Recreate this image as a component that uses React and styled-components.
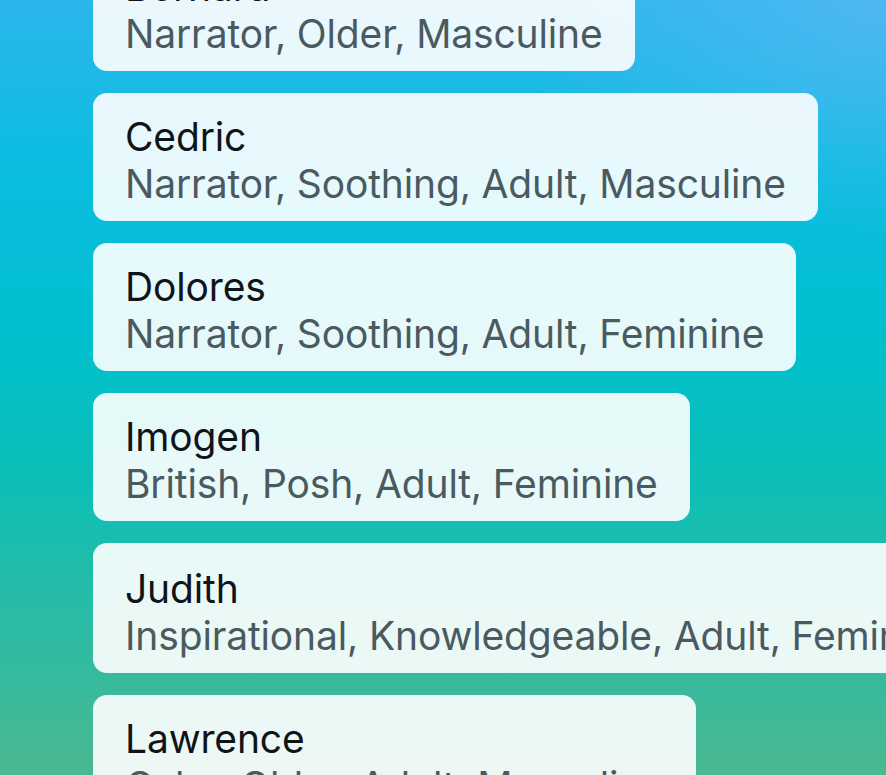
import styled, { createGlobalStyle } from 'styled-components'

const GlobalStyle = createGlobalStyle`
  html, body {
    margin: 0;
    padding: 0;
    overflow: hidden;
  }
  body {
    font-family: Inter, "Noto Sans", "Liberation Sans", sans-serif;
  }
`;

const voices = [
  { name: 'Bernard', tags: 'Narrator, Older, Masculine' },
  { name: 'Cedric', tags: 'Narrator, Soothing, Adult, Masculine' },
  { name: 'Dolores', tags: 'Narrator, Soothing, Adult, Feminine' },
  { name: 'Imogen', tags: 'British, Posh, Adult, Feminine' },
  { name: 'Judith', tags: 'Inspirational, Knowledgeable, Adult, Feminine', wide: true },
  { name: 'Lawrence', tags: 'Calm, Older, Adult, Masculine' },
];

const App = () => {
  return (
    <Page>
      <GlobalStyle />
      <VoiceList>
        {voices.map((v) => (
          <VoiceCard key={v.name} $wide={v.wide}>
            <VoiceName>{v.name}</VoiceName>
            <VoiceTags>{v.tags}</VoiceTags>
          </VoiceCard>
        ))}
      </VoiceList>
    </Page>
  );
};

export default App;

const Page = styled.div`
  width: 886px;
  height: 775px;
  overflow: hidden;
  background:
    radial-gradient(ellipse 380px 240px at 100% 0%, rgba(90, 184, 244, 0.75), rgba(90, 184, 244, 0) 100%),
    linear-gradient(180deg, #2cb6ec 0%, #0abde0 22%, #01bfcc 45%, #0cbfb6 62%, #2ebba3 82%, #4bb890 100%);
`;

const VoiceList = styled.div`
  display: flex;
  flex-direction: column;
  align-items: flex-start;
  gap: 22px;
  margin-top: -57px;
  padding-left: 93px;
`;

const VoiceCard = styled.div`
  display: flex;
  flex-direction: column;
  box-sizing: border-box;
  padding: ${(p) => (p.$wide ? '22px 32px 14px' : '20px 32px 14px')};
  min-height: ${(p) => (p.$wide ? '130px' : '128px')};
  background: rgba(255, 255, 255, 0.9);
  border-radius: 14px;
  white-space: nowrap;
  flex-shrink: 0;
`;

const VoiceName = styled.div`
  font-size: 39px;
  line-height: 47px;
  letter-spacing: -0.15px;
  font-weight: 400;
  color: #101418;
`;

const VoiceTags = styled.div`
  font-size: 39px;
  line-height: 47px;
  letter-spacing: -0.15px;
  font-weight: 400;
  color: #4a5a60;
`;
